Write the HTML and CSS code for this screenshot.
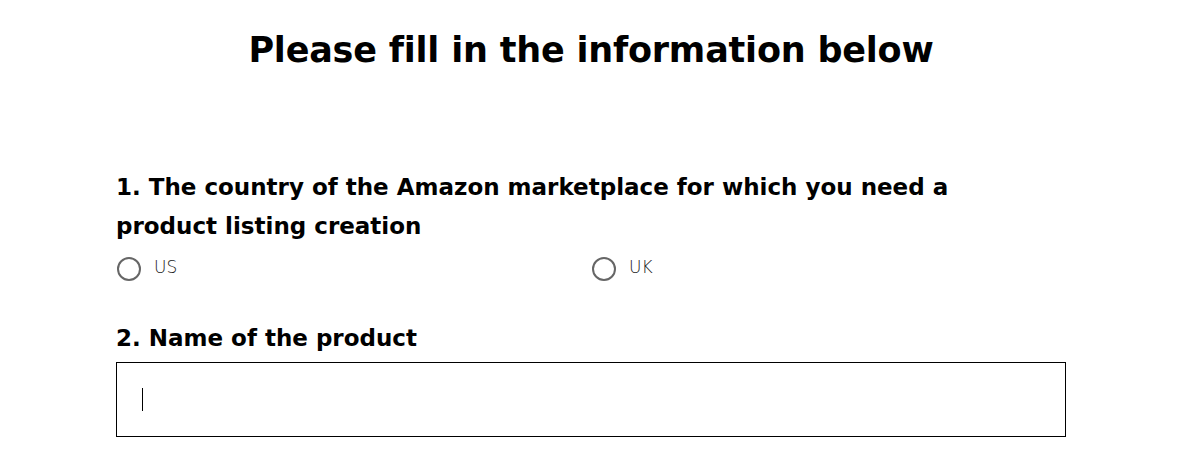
FILE: index.html
```html
<!DOCTYPE html>
<html>
<head>
<meta charset="utf-8">
<link rel="stylesheet" href="styles.css">
</head>
<body>
<div class="page">
  <h1 class="title">Please fill in the information below</h1>
  <div class="form">
    <div class="question">
      <div class="label">1. The country of the Amazon marketplace for which you need a product listing creation</div>
      <div class="options">
        <label class="option"><span class="radio"></span><span class="opt-text">US</span></label>
        <label class="option"><span class="radio"></span><span class="opt-text">UK</span></label>
      </div>
    </div>
    <div class="question q2">
      <div class="label">2. Name of the product</div>
      <div class="input"><span class="caret"></span></div>
    </div>
  </div>
</div>
</body>
</html>
```

FILE: styles.css
```css
html, body {
  margin: 0;
  padding: 0;
  background: #fff;
}
body {
  font-family: "DejaVu Sans", sans-serif;
  color: #000;
}
.page {
  width: 950px;
  margin-left: 116px;
  padding-top: 26px;
}
.title {
  margin: 0;
  text-align: center;
  font-size: 35px;
  font-weight: 700;
  line-height: 48px;
  letter-spacing: -0.2px;
}
.form {
  padding-top: 94px;
}
.label {
  font-size: 23px;
  font-weight: 700;
  line-height: 39px;
  letter-spacing: 0;
  width: 850px;
}
.options {
  display: grid;
  grid-template-columns: 1fr 1fr;
  margin-top: 9px;
}
.option {
  display: flex;
  align-items: center;
  gap: 13px;
  height: 28px;
}
.radio {
  width: 20px;
  height: 20px;
  border: 2px solid #666;
  border-radius: 50%;
  margin-left: 1px;
}
.opt-text {
  font-family: "DejaVu Sans", sans-serif;
  font-weight: 300;
  font-size: 17px;
  color: #222;
  position: relative;
  top: -2px;
}
.q2 {
  margin-top: 37px;
}
.q2 .label {
  line-height: 36px;
}
.input {
  margin-top: 6px;
  height: 73px;
  border: 1px solid #000;
  display: flex;
  align-items: center;
  padding-left: 25px;
}
.caret {
  width: 1px;
  height: 23px;
  background: #000;
}
```
